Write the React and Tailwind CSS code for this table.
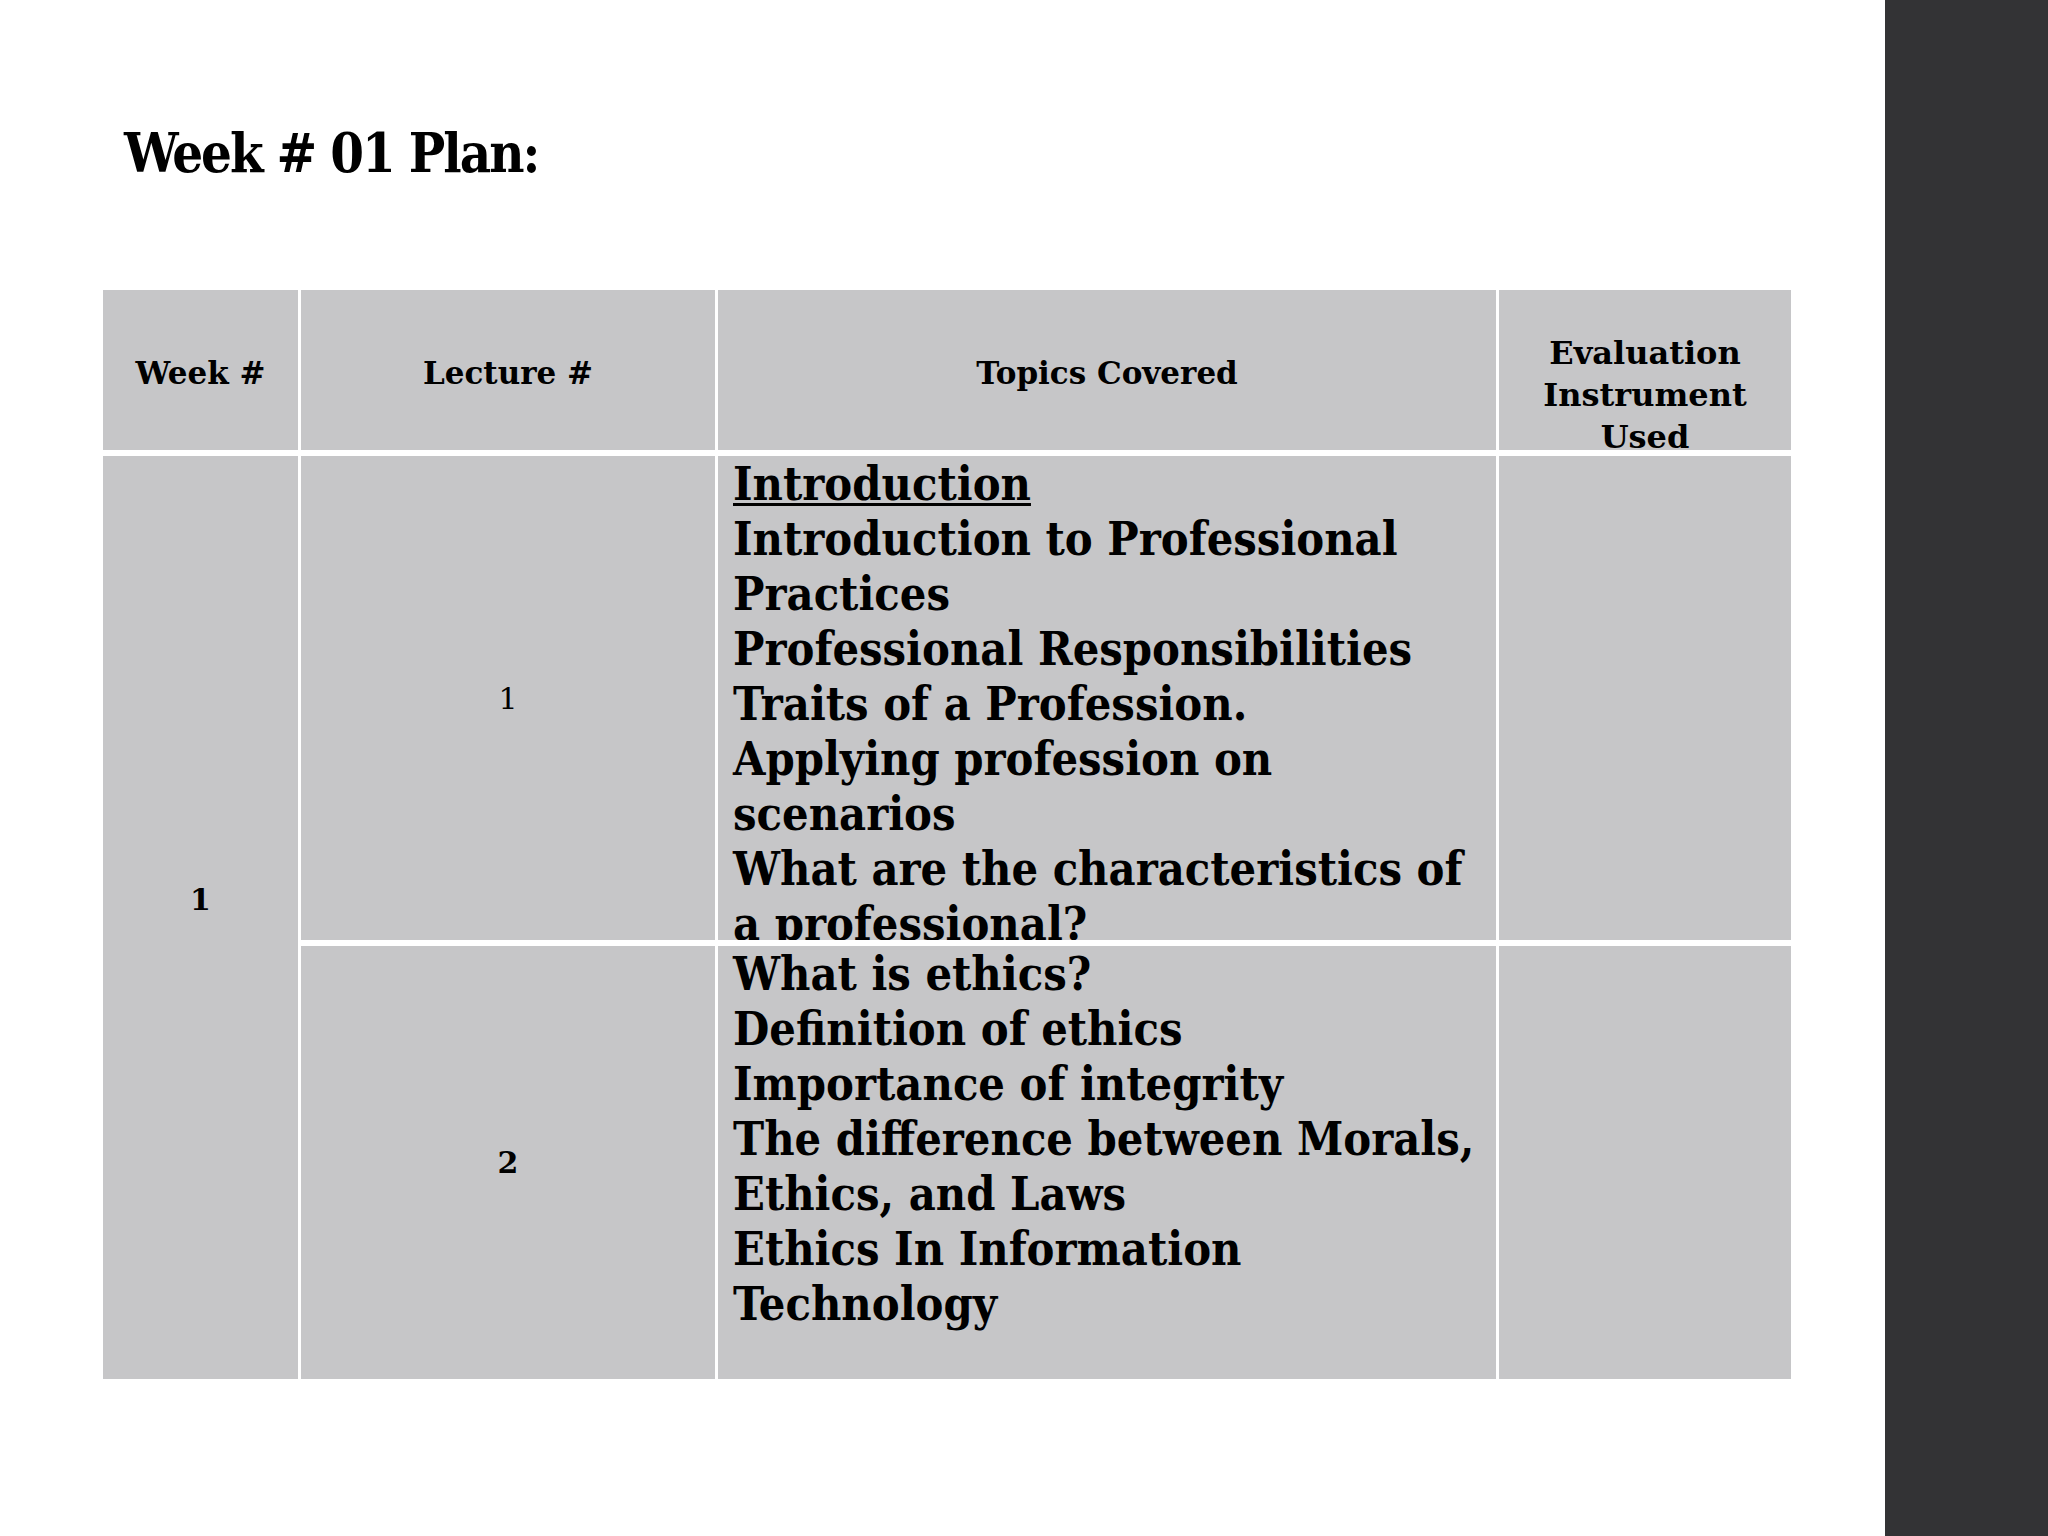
/* Week plan slide — table of lectures and topics */

const SERIF = "font-['DejaVu_Serif',serif]"
const BODY = "font-['DejaVu_Serif_Condensed','DejaVu_Serif',serif]"

const LECTURES = [
  {
    no: "1",
    bold: false,
    lines: [
      "Introduction to Professional",
      "Practices",
      "Professional Responsibilities",
      "Traits of a Profession.",
      "Applying profession on",
      "scenarios",
      "What are the characteristics of",
      "a professional?",
    ],
    heading: "Introduction",
  },
  {
    no: "2",
    bold: true,
    lines: [
      "What is ethics?",
      "Definition of ethics",
      "Importance of integrity",
      "The difference between Morals,",
      "Ethics, and Laws",
      "Ethics In Information",
      "Technology",
    ],
  },
]

export default function App() {
  return (
    <div className="w-[2048px] h-[1536px] bg-white flex overflow-hidden text-black">
      <main className="flex-1 pt-[126px] pl-[103px]">
        <h1 className={`${BODY} font-bold text-[54px] tracking-[-2px] leading-none h-[55px] pl-[21px]`}>
          Week # 01 Plan:
        </h1>

        {/* Table */}
        <div className="mt-[109px] grid grid-cols-[195px_414px_778px_292px] grid-rows-[160px_484px_433px] gap-x-[3px] gap-y-[6px]">
          <HeaderCell>Week #</HeaderCell>
          <HeaderCell>Lecture #</HeaderCell>
          <HeaderCell>Topics Covered</HeaderCell>
          <div className={`bg-[#c6c6c8] ${SERIF} font-bold text-[32px] leading-[42px] text-center pt-[42px]`}>
            Evaluation<br />Instrument<br />Used
          </div>

          <div className={`row-span-2 bg-[#c6c6c8] flex items-center justify-center pb-[36px] ${SERIF} font-bold text-[30px]`}>
            1
          </div>

          {LECTURES.map(l => (
            <LectureRow key={l.no} lecture={l} />
          ))}
        </div>
      </main>

      <aside className="w-[163px] bg-[#333335]" />
    </div>
  )
}

function HeaderCell({ children }) {
  return (
    <div className={`bg-[#c6c6c8] flex items-center justify-center pt-[6px] ${SERIF} font-bold text-[31px]`}>
      {children}
    </div>
  )
}

function LectureRow({ lecture }) {
  return (
    <>
      <div className={`bg-[#c6c6c8] flex items-center justify-center ${SERIF} text-[30px] ${lecture.bold ? "font-bold" : "font-normal"}`}>
        {lecture.no}
      </div>
      <div className={`bg-[#c6c6c8] overflow-hidden pl-[15px] ${BODY} font-bold text-[46.5px] leading-[55px] whitespace-nowrap`}>
        {lecture.heading && <p className="underline decoration-[3px] underline-offset-[3px]">{lecture.heading}</p>}
        {lecture.lines.map((t, i) => (
          <p key={i}>{t}</p>
        ))}
      </div>
      <div className="bg-[#c6c6c8]" />
    </>
  )
}
